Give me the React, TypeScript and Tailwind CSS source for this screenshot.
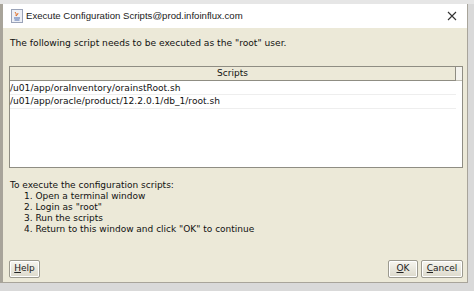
import React from "react";

const body = { fontFamily: '"DejaVu Sans", Verdana, sans-serif' };

function Btn({ children, className = "" }: { children: React.ReactNode; className?: string }) {
  return (
    <div
      className={`h-[18px] flex items-center justify-center rounded-[2px] border border-[#9c9a8f] bg-gradient-to-b from-[#f7f6f0] to-[#dcd9cb] text-[9px] text-[#222] shadow-[inset_0_0_0_1px_#fff] ${className}`}
      style={body}
    >
      {children}
    </div>
  );
}

export default function App() {
  return (
    <div className="w-[474px] h-[291px] bg-[#d9d9d9] overflow-hidden flex flex-col">
      <div className="h-[4px] bg-[#e6e6e6]" />
      <div className="flex">
        <div className="w-[468px] h-[279px] flex flex-col border-l-[3px] border-r border-b border-[#a8a49a] bg-[#ece9d8]">
          {/* title bar */}
          <div className="h-[24px] bg-white flex items-center pl-[8px] pr-[10px] shrink-0">
            <svg width="12" height="14" viewBox="0 0 12 14" className="mr-[3px]">
              <rect x="0.5" y="0.5" width="11" height="13" fill="#eef0f6" stroke="#9aa3b8" />
              <path d="M4 3 Q6 5 5 7 Q7 6 7 4" stroke="#e0702a" fill="none" strokeWidth="1" />
              <path d="M3 9 h6 M3.5 11 h5" stroke="#4d6aa8" strokeWidth="1" />
            </svg>
            <span
              className="text-[9.6px] text-[#1a1a1a] flex-1"
              style={{ fontFamily: '"Liberation Sans", Arial, sans-serif' }}
            >
              Execute Configuration Scripts@prod.infoinflux.com
            </span>
            <svg width="10" height="10" viewBox="0 0 10 10">
              <path d="M1 1 L9 9 M9 1 L1 9" stroke="#333" strokeWidth="1.1" />
            </svg>
          </div>
          {/* content */}
          <div className="flex-1 flex flex-col pl-[6px] pr-[4px] text-[#111]" style={body}>
            <div className="text-[9.15px] mt-[9px] h-[12px] leading-[12px] pl-[1px]">
              The following script needs to be executed as the "root" user.
            </div>
            <div className="mt-[17px] h-[102px] border border-[#8f8d83] bg-white flex flex-col relative">
              <div className="h-[14px] flex border-b border-[#8f8d83] bg-[#ece9d8] mr-[6px]">
                <div className="flex-1 text-center text-[9px] leading-[13px] border-r border-[#8f8d83]">Scripts</div>
              </div>
              <div className="absolute right-0 top-0 w-[6px] h-[14px] border-b border-[#c0beb4] bg-[#f4f3ee]" />
              <div className="text-[9.1px] leading-[13px] h-[14px] border-b border-[#eeeeee] mr-[6px] pt-[1px]">
                /u01/app/oraInventory/orainstRoot.sh
              </div>
              <div className="text-[9.1px] leading-[13px] h-[14px] border-b border-[#eeeeee] mr-[6px]">
                /u01/app/oracle/product/12.2.0.1/db_1/root.sh
              </div>
            </div>
            <div className="mt-[12px] text-[9px] leading-[11px] pl-[1px]">
              <div>To execute the configuration scripts:</div>
              <div className="pl-[14px]">1. Open a terminal window</div>
              <div className="pl-[14px]">2. Login as "root"</div>
              <div className="pl-[14px]">3. Run the scripts</div>
              <div className="pl-[14px]">4. Return to this window and click "OK" to continue</div>
            </div>
            <div className="flex-1" />
            <div className="flex items-center mb-[4px]">
              <Btn className="w-[31px]">
                <span><span className="underline">H</span>elp</span>
              </Btn>
              <div className="flex-1" />
              <Btn className="w-[30px] mr-[3px]">
                <span><span className="underline">O</span>K</span>
              </Btn>
              <Btn className="w-[42px]">
                <span><span className="underline">C</span>ancel</span>
              </Btn>
            </div>
          </div>
        </div>
      </div>
    </div>
  );
}
